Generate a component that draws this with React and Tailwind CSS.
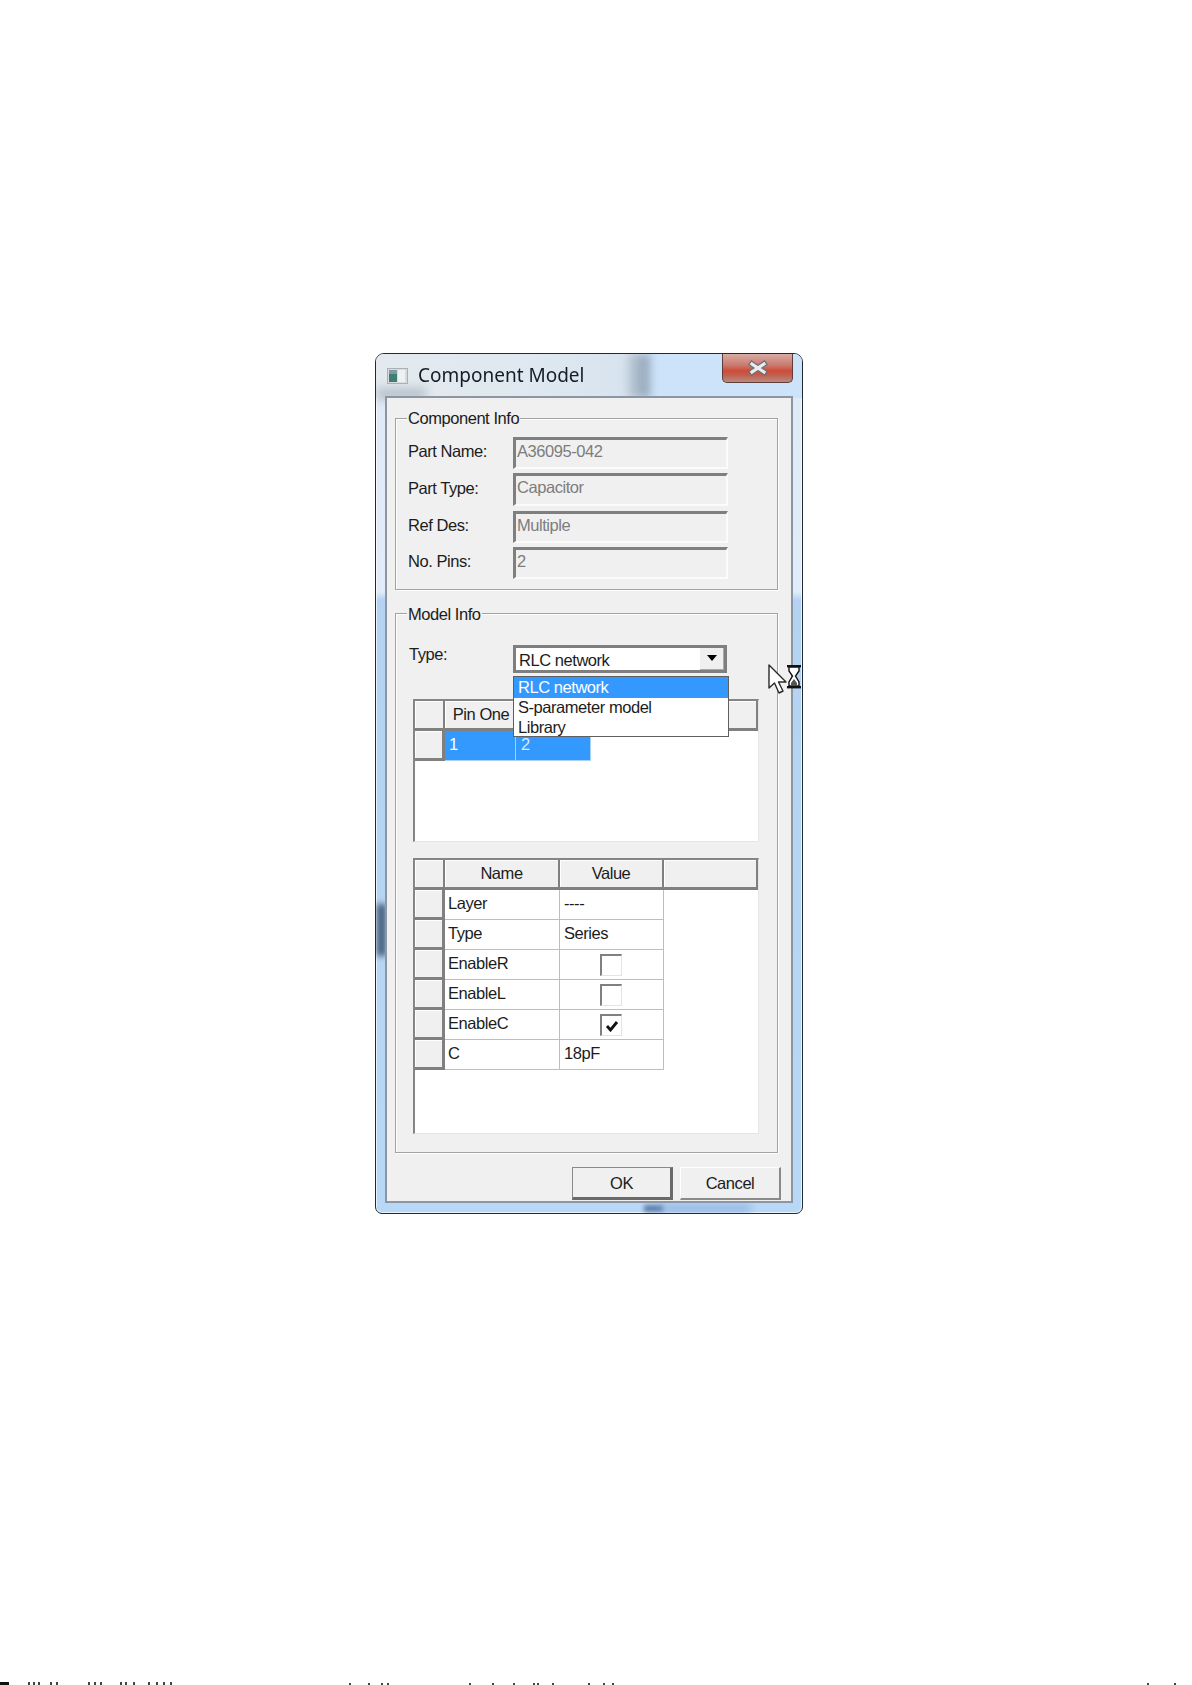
const font = "font-['Liberation_Sans',Arial,sans-serif] text-[16.5px] tracking-[-0.45px] leading-[20px] text-[#1c1c1c]";

function Group({ label, className, labelClass, children }) {
  return (
    <div className={"relative border border-[#a2a2a2] shadow-[inset_1px_1px_0_#fff,1px_1px_0_#fff] " + className}>
      <span className={"absolute left-[11px] bg-[#f0f0f0] pl-[1px] pr-[1px] " + labelClass}>{label}</span>
      {children}
    </div>
  );
}

function Field({ label, value, className }) {
  return (
    <div className={"flex " + className}>
      <span className="w-[105px] self-center -mt-[4px]">{label}</span>
      <div className="w-[215px] flex items-center pl-[1px] pb-[6px] border-t-[3px] border-l-[3px] border-t-[#7f7f7f] border-l-[#7f7f7f] border-b-2 border-r-2 border-b-[#fbfbfb] border-r-[#fbfbfb] text-[#7d7d7d]">
        {value}
      </div>
    </div>
  );
}

function RowHead({ h = "h-[30px]" }) {
  return <div className={"w-[30px] shrink-0 bg-[#f0f0f0] border-r-[3px] border-b-[3px] border-[#808080] shadow-[inset_1px_1px_0_#fff] " + h} />;
}

function HeadCell({ w, children, grow }) {
  return (
    <div className={"bg-[#f0f0f0] border-r-2 border-b-[3px] border-[#808080] flex items-center justify-center pb-[2px] shadow-[inset_1px_1px_0_#fff] " + w + (grow ? " grow" : "")}>
      {children}
    </div>
  );
}

function Check({ on }) {
  return (
    <div className="w-[22px] h-[22px] mt-[4px] -ml-[1px] border-t-2 border-l-2 border-t-[#808080] border-l-[#808080] border-b border-r border-b-[#e4e4e4] border-r-[#e4e4e4] bg-white flex items-center justify-center">
      {on && (
        <svg width="14" height="12" viewBox="0 0 14 12">
          <path d="M2 6 L5.5 10 L12 2" fill="none" stroke="#111" strokeWidth="2.8" />
        </svg>
      )}
    </div>
  );
}

function Row({ name, value, check, h = "h-[30px]" }) {
  return (
    <div className="flex">
      <RowHead h={h} />
      <div className={"w-[115px] border-r border-b border-[#bdbdbd] pl-[3px] pt-[3px] " + h}>{name}</div>
      <div className={"w-[104px] border-r border-b border-[#bdbdbd] flex " + h + (check !== undefined ? " justify-center" : " pl-[4px] pt-[3px]")}>
        {check !== undefined ? <Check on={check} /> : value}
      </div>
    </div>
  );
}

export default function App() {
  return (
    <div className={"h-[1685px] w-[1192px] bg-white flex flex-col overflow-hidden " + font}>
      <div className="ml-[375px] mt-[353px] w-[428px] relative border border-[#1f2a35] rounded-t-[9px] rounded-b-[7px] overflow-hidden pt-[42px] pl-[9px] pr-[9px] pb-[10px] bg-[linear-gradient(180deg,#dfeaf6_0,#e0ecf9_238px,#b4d3f3_246px,#b9d8f7_100%)] shadow-[inset_0_0_0_1px_#ffffffb0] blur-[0.5px]">
        {/* blurred desktop behind the glass */}
        <div className="absolute left-0 top-0 w-[270px] h-[44px] bg-[linear-gradient(90deg,#e3e9ef,#dfe8f0_60%,#d5e2ee)]" />
        <div className="absolute left-0 top-[34px] w-[50px] h-[12px] bg-[#b9c2cb] blur-[5px]" />
        <div className="absolute left-[270px] top-0 right-0 h-[44px] bg-[#cde3f9]" />
        <div className="absolute left-[252px] top-0 w-[22px] h-[44px] bg-[linear-gradient(90deg,#bccbd8,#8ea2b5)] blur-[4px]" />
        <div className="absolute left-[1px] top-[550px] w-[9px] h-[52px] bg-[#3f5878] blur-[3px]" />
        <div className="absolute left-[268px] bottom-[1px] w-[20px] h-[7px] bg-[#5f80ad] blur-[2px]" />
        <div className="absolute left-[285px] bottom-[1px] w-[90px] h-[7px] bg-[#8fb2df] blur-[4px]" />

        {/* title bar */}
        <svg className="absolute left-[11px] top-[14px]" width="21" height="16" viewBox="0 0 21 16">
          <rect x="0.5" y="0.5" width="20" height="15" fill="#d7dcde" stroke="#a9b1b5" />
          <rect x="2" y="2" width="8" height="12" fill="#3f7f72" />
          <rect x="2" y="2" width="8" height="4" fill="#7f9aa5" />
          <rect x="11" y="2" width="7" height="12" fill="#eef1f2" />
        </svg>
        <span className="absolute left-[42px] top-[8px] font-['Noto_Sans',sans-serif] text-[19px] leading-[26px] tracking-[0px] text-[#141c26]">Component Model</span>
        <div className="absolute right-[9px] top-0 w-[71px] h-[29px] rounded-b-[5px] border border-t-0 border-[#5e3d3a] bg-[linear-gradient(180deg,#d8aca5_0,#c97a6e_40%,#cf4a38_60%,#c0604f_76%,#b98a80_100%)] flex items-center justify-center">
          <svg width="22" height="16" viewBox="0 0 22 16">
            <path d="M5 4 L17 12 M17 4 L5 12" stroke="#6b6f75" strokeWidth="5.6" strokeLinecap="square" />
            <path d="M5 4 L17 12 M17 4 L5 12" stroke="#e9ebee" strokeWidth="3.2" strokeLinecap="square" />
          </svg>
        </div>

        {/* client area */}
        <div className="relative bg-[#f0f0f0] border-2 border-[#8b96a2] pt-[20px] pl-[8px] pr-[10px] pb-[1px] flex flex-col">
          <Group label="Component Info" labelClass="-top-[11px]" className="w-[383px] h-[172px] pt-[18px] pl-[12px]">
            <Field label="Part Name:" value="A36095-042" className="h-[32px]" />
            <Field label="Part Type:" value="Capacitor" className="h-[33px] mt-[4px]" />
            <Field label="Ref Des:" value="Multiple" className="h-[32px] mt-[5px]" />
            <Field label="No. Pins:" value="2" className="h-[32px] mt-[4px]" />
          </Group>

          <Group label="Model Info" labelClass="-top-[10px]" className="w-[383px] mt-[23px] pt-[31px] pb-[18px] pl-[17px]">
            <div className="flex relative h-[28px]">
              <span className="w-[96px] -ml-[4px] -mt-[1px]">Type:</span>
              <div className="w-[214px] h-[28px] ml-[8px] bg-white border-[3px] border-[#7f7f7f] flex">
                <span className="grow pl-[3px] pt-[2px]">RLC network</span>
                <div className="w-[24px] bg-[#f0f0f0] border-r border-b border-[#aaaaaa] flex items-center justify-center">
                  <svg width="12" height="7" viewBox="0 0 12 7"><path d="M1 0 H11 L6 6 Z" fill="#000" /></svg>
                </div>
              </div>
              {/* open list */}
              <div className="absolute left-[100px] top-[31px] w-[216px] h-[61px] z-20 bg-white border border-[#5f5f5f] leading-[18px]">
                <div className="h-[21px] bg-[#3399ff] text-white pl-[4px] pt-[1px]">RLC network</div>
                <div className="h-[20px] pl-[4px]">S-parameter model</div>
                <div className="h-[18px] pl-[4px]">Library</div>
              </div>
            </div>

            <div className="mt-[26px] w-[346px] h-[143px] bg-white border-t-2 border-l-2 border-t-[#858585] border-l-[#858585] border-b border-r border-b-[#e6e6e6] border-r-[#e6e6e6]">
              <div className="flex h-[30px]">
                <HeadCell w="w-[30px]" />
                <HeadCell w="w-[71px]"><span className="ml-[3px]">Pin One</span></HeadCell>
                <HeadCell w="w-[75px]" />
                <HeadCell grow />
              </div>
              <div className="flex">
                <RowHead />
                <div className="w-[71px] h-[30px] bg-[#3399ff] border-r border-b border-[#a9d2fb] text-white pl-[4px] pt-[3px]">1</div>
                <div className="w-[75px] h-[30px] bg-[#3399ff] border-r border-b border-[#a9d2fb] text-[#d7ebff] pl-[5px] pt-[3px]">2</div>
              </div>
            </div>

            <div className="mt-[16px] w-[346px] h-[276px] bg-white border-t-2 border-l-2 border-t-[#858585] border-l-[#858585] border-b border-r border-b-[#e6e6e6] border-r-[#e6e6e6]">
              <div className="flex h-[30px]">
                <HeadCell w="w-[30px]" />
                <HeadCell w="w-[115px]">Name</HeadCell>
                <HeadCell w="w-[104px]">Value</HeadCell>
                <HeadCell grow />
              </div>
              <Row name="Layer" value="----" />
              <Row name="Type" value="Series" />
              <Row name="EnableR" check={false} />
              <Row name="EnableL" check={false} />
              <Row name="EnableC" check={true} />
              <Row name="C" value="18pF" h="h-[30px]" />
            </div>
          </Group>

          <div className="mt-[14px] flex justify-end gap-[7px]">
            <div className="w-[101px] h-[33px] bg-[#f0f0f0] border-t border-l border-t-[#8a8a8a] border-l-[#8a8a8a] border-r-[3px] border-b-[3px] border-r-[#6a6a6a] border-b-[#6a6a6a] flex items-center justify-center">OK</div>
            <div className="w-[101px] h-[33px] bg-[#f0f0f0] border-t border-l border-t-white border-l-white border-r-2 border-b-2 border-r-[#8a8a8a] border-b-[#8a8a8a] flex items-center justify-center">Cancel</div>
          </div>
        </div>

        {/* mouse pointer with hourglass */}
        <svg className="absolute left-[392px] top-[310px] z-30" width="36" height="32" viewBox="0 0 36 32">
          <path d="M1 1 V24 L6.5 19 L11 29 L15 27 L10.5 18 H18 Z" fill="#fff" stroke="#2a2a2a" strokeWidth="1.4" strokeLinejoin="round" />
          <rect x="19" y="1" width="14" height="2.4" fill="#111" />
          <rect x="19" y="22" width="14" height="2.4" fill="#111" />
          <path d="M21 3 H31 V7 L27.5 12 L31 18 V22 H21 V18 L24.5 12 L21 7 Z" fill="#fff" stroke="#111" strokeWidth="1.4" />
          <path d="M23 19 L26 15 L29 19 V21 H23 Z" fill="#555" />
        </svg>
      </div>

      {/* tops of a line of print cut off by the lower edge */}
      <svg className="mt-auto shrink-0" width="1192" height="3" viewBox="0 0 1192 3">
        <g fill="#444">
          <rect x="0" y="0" width="9" height="3" fill="#111" />
          <rect x="28" y="0" width="2" height="3" /><rect x="33" y="0" width="2" height="3" /><rect x="38" y="0" width="2" height="3" />
          <rect x="50" y="0" width="2" height="3" /><rect x="56" y="0" width="2" height="3" />
          <rect x="88" y="0" width="2" height="3" /><rect x="94" y="0" width="2" height="3" /><rect x="100" y="0" width="2" height="3" />
          <rect x="120" y="0" width="2" height="3" /><rect x="125" y="0" width="2" height="3" /><rect x="133" y="0" width="2" height="3" />
          <rect x="148" y="0" width="2" height="3" /><rect x="156" y="0" width="2" height="3" /><rect x="163" y="0" width="2" height="3" />
          <rect x="170" y="0" width="2" height="3" />
          <rect x="349" y="1" width="2" height="2" /><rect x="368" y="1" width="2" height="2" /><rect x="381" y="1" width="2" height="2" /><rect x="387" y="1" width="2" height="2" />
          <rect x="469" y="1" width="2" height="2" /><rect x="492" y="1" width="2" height="2" /><rect x="513" y="1" width="2" height="2" /><rect x="533" y="1" width="2" height="2" /><rect x="537" y="1" width="2" height="2" /><rect x="552" y="1" width="2" height="2" />
          <rect x="588" y="1" width="2" height="2" /><rect x="603" y="1" width="2" height="2" /><rect x="612" y="1" width="2" height="2" />
          <rect x="1147" y="1" width="2" height="2" /><rect x="1174" y="1" width="2" height="2" />
        </g>
      </svg>
    </div>
  );
}
